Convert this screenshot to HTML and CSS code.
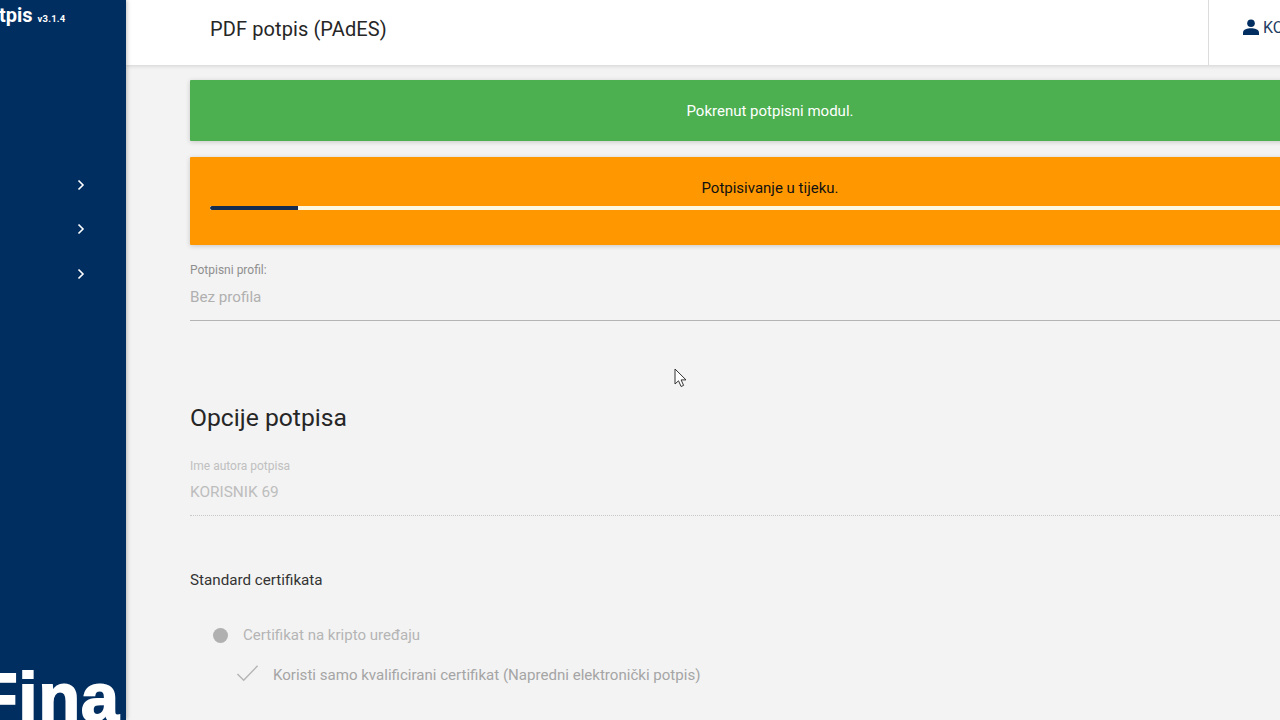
FILE: index.html
```html
<!DOCTYPE html>
<html lang="hr">
<head>
<meta charset="utf-8">
<title>PDF potpis (PAdES)</title>
<link rel="stylesheet" href="styles.css">
</head>
<body>
<div class="app">
  <aside class="sidebar">
    <div class="brand"><span class="brand-name">tpis</span><span class="brand-version">v3.1.4</span></div>
    <nav class="nav">
      <div class="nav-item"><svg class="chev" viewBox="0 0 8 12"><path d="M1.500 1.500 6 6l-4.500 4.500"/></svg></div>
      <div class="nav-item"><svg class="chev" viewBox="0 0 8 12"><path d="M1.500 1.500 6 6l-4.500 4.500"/></svg></div>
      <div class="nav-item"><svg class="chev" viewBox="0 0 8 12"><path d="M1.500 1.500 6 6l-4.500 4.500"/></svg></div>
    </nav>
    <div class="logo">Fina</div>
  </aside>
  <div class="main">
    <header class="topbar">
      <h1 class="title">PDF potpis (PAdES)</h1>
      <div class="user">
        <svg class="user-icon" viewBox="0 0 16 16"><circle cx="8" cy="4.300" r="3.800"/><path d="M0 16v-2.500C0 10.500 4.500 9.300 8 9.300s8 1.200 8 4.200V16z"/></svg>
        <span class="user-name">KO</span>
      </div>
    </header>
    <main class="content">
      <div class="banner banner-ok">Pokrenut potpisni modul.</div>
      <div class="banner banner-progress">
        <div class="banner-text">Potpisivanje u tijeku.</div>
        <div class="progress"><div class="progress-fill"></div></div>
      </div>
      <div class="field">
        <div class="field-label">Potpisni profil:</div>
        <div class="field-value">Bez profila</div>
      </div>
      <h2 class="section-title">Opcije potpisa</h2>
      <div class="field field-disabled">
        <div class="field-label">Ime autora potpisa</div>
        <div class="field-value">KORISNIK 69</div>
      </div>
      <h3 class="sub-title">Standard certifikata</h3>
      <div class="radio-row"><span class="radio-dot"></span><span>Certifikat na kripto uređaju</span></div>
      <div class="check-row">
        <svg class="check" viewBox="0 0 24 18"><path d="M1.500 10 8 16.500 22.500 1.500"/></svg>
        <span>Koristi samo kvalificirani certifikat (Napredni elektronički potpis)</span>
      </div>
    </main>
  </div>
</div>
<svg class="cursor" viewBox="0 0 14 20"><path d="M1 1v15l3.500-3.200 2.600 5.700 2.500-1.100-2.500-5.500H12z"/></svg>
</body>
</html>
```
FILE: styles.css
```css
* { box-sizing: border-box; }
html, body { margin: 0; height: 100%; overflow: hidden; }
body { font-family: Roboto, "Liberation Sans", sans-serif; background: #f3f3f3; color: #222; }
.app { display: flex; width: 1280px; height: 720px; overflow: hidden; }

.sidebar {
  width: 126px; flex: none; background: #012e61; color: #fff;
  display: flex; flex-direction: column; position: relative;
  overflow: hidden; box-shadow: 1px 0 4px rgba(0,0,0,.25); z-index: 2;
}
.brand { display: flex; align-items: baseline; height: 34px; padding-top: 1px; gap: 5px; }
.brand-name { font-size: 20px; font-weight: 700; line-height: 28px; margin-left: -1px; }
.brand-version { font-size: 9.500px; font-weight: 700; letter-spacing: .2px; }
.nav { display: flex; flex-direction: column; margin-top: 128.500px; }
.nav-item { height: 44.500px; display: flex; align-items: center; padding-left: 77px; }
.chev { width: 8px; height: 12px; fill: none; stroke: #fff; stroke-width: 1.600; }
.logo {
  position: absolute; left: -24px; top: 655px;
  font: 700 68px/84px "Liberation Sans", sans-serif; letter-spacing: 1px;
  -webkit-text-stroke: 2px #fff;
}

.main { flex: none; width: 1224px; display: flex; flex-direction: column; }
.topbar {
  height: 65px; flex: none; background: #fff; display: flex; align-items: stretch;
  justify-content: space-between; box-shadow: 0 1px 4px rgba(0,0,0,.14); position: relative; z-index: 1;
}
.title { margin: 0 0 0 84px; font-size: 20px; font-weight: 400; line-height: 58px; color: #262626; letter-spacing: .1px; }
.user {
  width: 142px; border-left: 1px solid #dcdcdc; display: flex;
  padding: 18px 0 0 34px; gap: 4px; color: #012e61; font-size: 16px; line-height: 20px;
  align-items: flex-start;
}
.user-icon { width: 16px; height: 16px; fill: #012e61; margin-top: 1px; }
.user-name { color: #1f3d63; }

.content { padding: 15px 0 0 64px; width: 1224px; }
.banner {
  width: 1160px; border-radius: 1px; box-shadow: 0 1px 5px rgba(0,0,0,.18);
  text-align: center; font-size: 15px;
}
.banner-ok { height: 61px; background: #4caf50; color: #fff; line-height: 62px; }
.banner-progress { height: 88px; margin-top: 16px; background: #ff9800; color: #111; padding: 23px 20px 0; }
.banner-text { line-height: 17px; }
.progress { height: 4px; margin-top: 9px; background: #fff8e1; }
.progress-fill { width: 88px; height: 100%; background: #132c50; border-radius: 2px 0 0 2px; }

.field { width: 1160px; }
.field-label { font-size: 12px; color: #8f8f8f; line-height: 14px; padding-top: 18px; }
.field-value { font-size: 15.200px; color: #b0b0b0; line-height: 20px; margin-top: 10px; height: 34px; border-bottom: 1px solid #b4b4b4; }
.section-title { margin: 81px 0 0; font-size: 24.700px; font-weight: 400; line-height: 32px; color: #262626; }
.field-disabled .field-label { color: #c0c0c0; padding-top: 25px; }
.field-disabled .field-value { color: #bdbdbd; font-size: 15.400px; margin-top: 9px; height: 34px; border-bottom: 1px dotted #c8c8c8; }
.sub-title { margin: 55px 0 0; font-size: 15.200px; font-weight: 400; line-height: 18px; color: #333; }
.radio-row {
  display: flex; align-items: center; gap: 15px; margin: 36px 0 0 23px;
  font-size: 15.050px; line-height: 20px; color: #b5b5b5;
}
.radio-dot { width: 15px; height: 15px; border-radius: 50%; background: #b0b0b0; }
.check-row {
  display: flex; align-items: center; gap: 14px; margin: 20px 0 0 46px;
  font-size: 15.070px; line-height: 20px; color: #a5a5a5;
}
.check { width: 23px; height: 18px; margin-top: -4px; fill: none; stroke: #b5b5b5; stroke-width: 1.500; }
.cursor { position: absolute; left: 674px; top: 368px; width: 14px; height: 20px; fill: #fff; stroke: #333; stroke-width: 1; z-index: 5; }
```
